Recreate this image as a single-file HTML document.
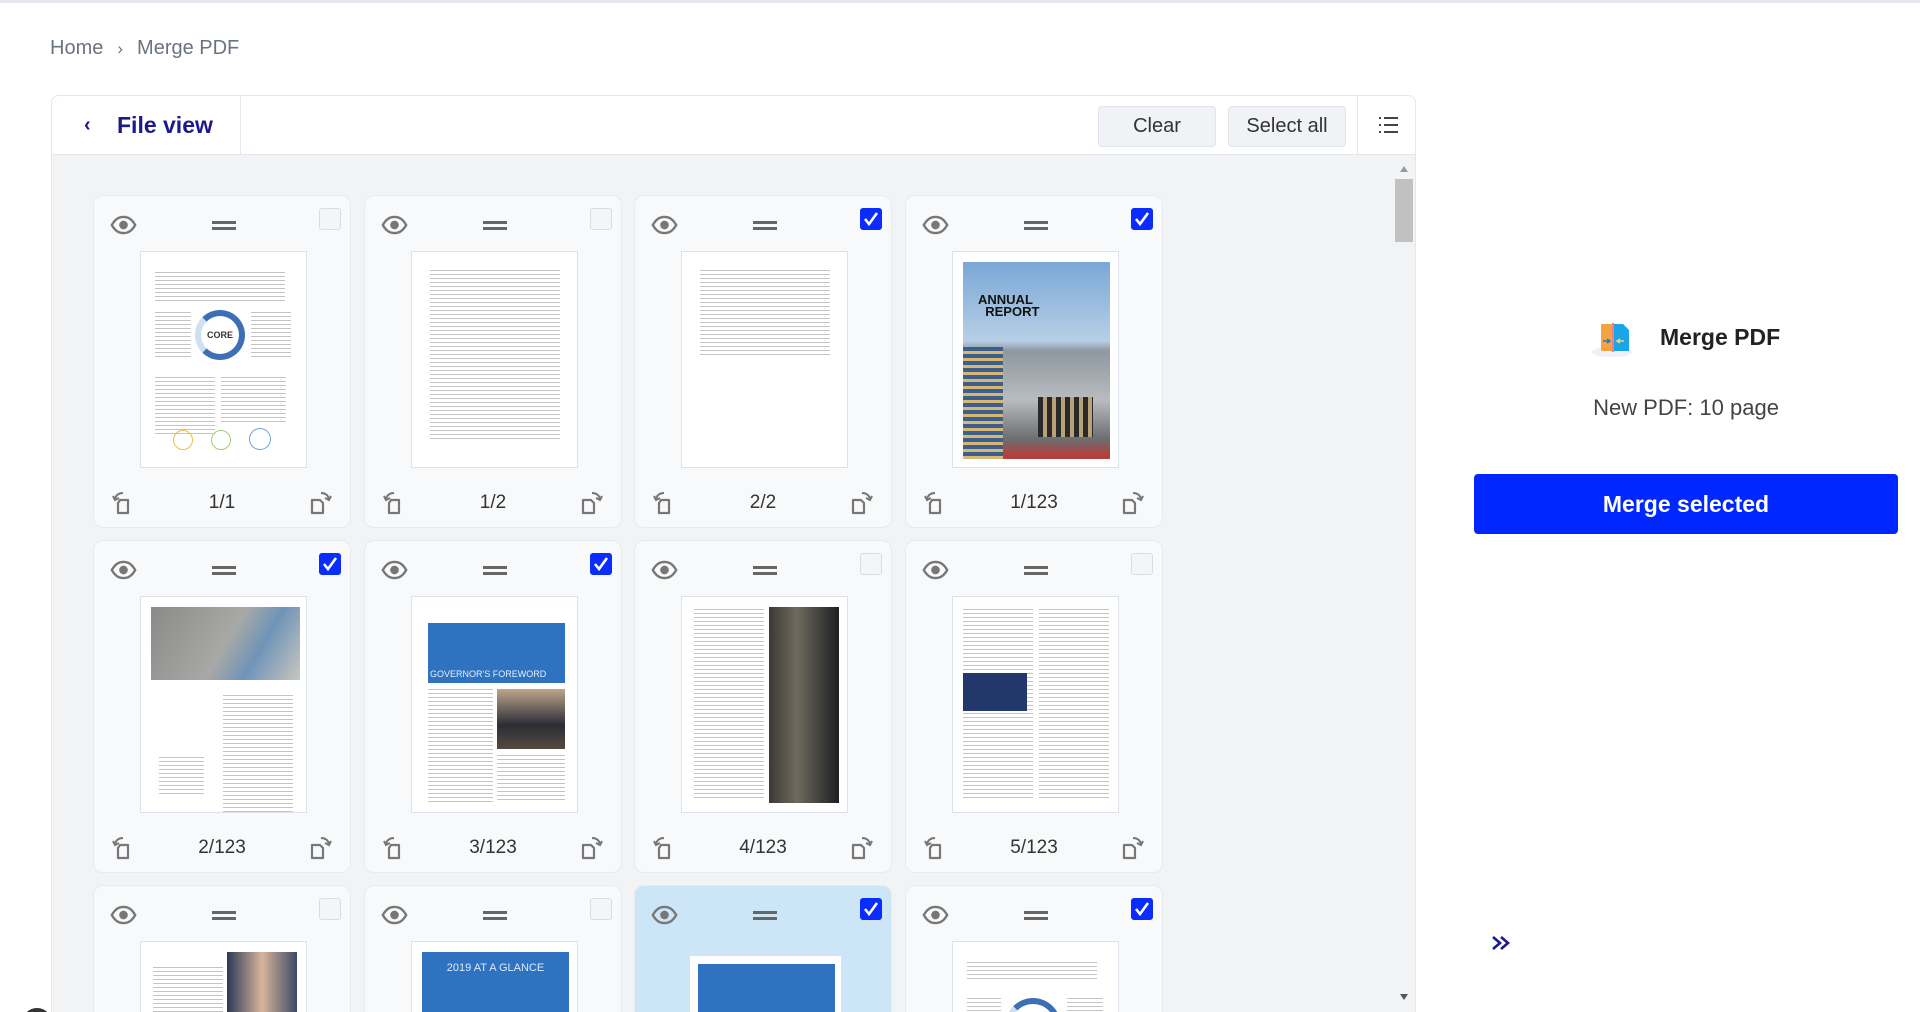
<!DOCTYPE html>
<html><head><meta charset="utf-8"><style>
*{box-sizing:border-box;margin:0;padding:0}
html,body{width:1920px;height:1012px;overflow:hidden;background:#fff;font-family:"Liberation Sans",sans-serif;position:relative}
.topline{position:absolute;left:0;top:0;width:1920px;height:3px;background:#e6e8ef}
.bc{position:absolute;left:50px;top:37px;font-size:20px;color:#6b7280}
.bc span{margin:0 14px;font-size:17px}
.panel{position:absolute;left:51px;top:95px;width:1365px;height:917px;border:1px solid #e3e6ec;border-bottom:none;border-radius:8px 8px 0 0;background:#f2f3f5;overflow:hidden}
.hdr{position:absolute;left:0;top:0;width:100%;height:59px;background:#fff;border-bottom:1px solid #e3e6ec}
.fv{position:absolute;left:0;top:0;width:189px;height:58px;border-right:1px solid #e3e6ec;font-weight:bold;color:#1a1a8e;font-size:23px;line-height:58px;padding-left:65px}
.fv i{position:absolute;left:32px;top:0;font-style:normal;font-size:20px}
.btn{position:absolute;top:10px;height:41px;background:#f0f2f5;border:1px solid #e0e3e8;border-radius:4px;font-size:20px;color:#333;text-align:center;line-height:39px}
.lst{position:absolute;left:1305px;top:0;width:59px;height:58px;border-left:1px solid #e3e6ec}
.sb{position:absolute;left:1341px;top:60px;width:22px;height:857px}
.card{position:absolute;width:258px;height:333px;background:#f8f9fa;border:1px solid #e8eaee;border-radius:10px;overflow:hidden}
.card.cut{height:127px;border-bottom:none;border-radius:10px 10px 0 0}
.card.hl{background:#cde6f7}
.eye{position:absolute;left:16px;top:19px}
.drag{position:absolute;left:118px;top:25px;width:24px;height:9px;border-top:3px solid #666;border-bottom:3px solid #666}
.cb{position:absolute;left:225px;top:12px;width:22px;height:22px;border:1px solid #ddd;border-radius:3px;background:#f4f5f7}
.cb.on{background:#0a2cff;border-color:#0a2cff}
.th{position:absolute;left:46px;top:55px;width:167px;height:217px;background:#fff;border:1px solid #dde1ea;overflow:hidden}
.lbl{position:absolute;left:0;width:100%;top:296px;text-align:center;font-size:19px;color:#333}
.rl{position:absolute;left:16px;top:294px}.rr{position:absolute;left:212px;top:294px}
.tx{position:absolute;background:repeating-linear-gradient(#c4c4c4 0 1px,transparent 1px 4px)}
</style></head><body>
<div class="topline"></div>
<div class="bc">Home<span>›</span>Merge PDF</div>
<div class="panel">
 <div class="hdr">
  <div class="fv"><i>‹</i>File view</div>
  <div class="btn" style="left:1046px;width:118px">Clear</div>
  <div class="btn" style="left:1176px;width:118px">Select all</div>
  <div class="lst"><svg width="59" height="58"><g stroke="#444" stroke-width="2"><line x1="21" y1="22" x2="23" y2="22"/><line x1="26" y1="22" x2="40" y2="22"/><line x1="21" y1="29" x2="23" y2="29"/><line x1="26" y1="29" x2="40" y2="29"/><line x1="21" y1="36" x2="23" y2="36"/><line x1="26" y1="36" x2="40" y2="36"/></g></svg></div>
 </div>
 <div class="sb"><svg width="22" height="857"><path d="M7 16l4-6 4 6z" fill="#999"/><rect x="2" y="23" width="18" height="63" fill="#c1c1c1"/><path d="M7 838l4 6 4-6z" fill="#555"/></svg></div>
</div>
<div id="cards"></div>
<div style="position:absolute;left:1590px;top:318px;width:44px;height:42px">
<svg width="44" height="42"><ellipse cx="22" cy="34" rx="20" ry="5" fill="#eef1f7"/><rect x="11" y="6" width="12" height="27" rx="1" fill="#f5a340"/><path d="M23 6h10l6 6v21H23z" fill="#1ba4e8"/><rect x="22" y="5" width="2" height="29" fill="#f08080"/><path d="M13 23h7M17 21l3 2-3 2" stroke="#1a7ae8" stroke-width="1.5" fill="none"/><path d="M34 23h-7M30 21l-3 2 3 2" stroke="#ffd36b" stroke-width="1.5" fill="none"/></svg></div>
<div style="position:absolute;left:1660px;top:324px;font-size:23px;font-weight:bold;color:#222">Merge PDF</div>
<div style="position:absolute;left:1474px;width:424px;top:395px;text-align:center;font-size:22px;color:#444">New PDF: 10 page</div>
<div style="position:absolute;left:1474px;top:474px;width:424px;height:60px;background:#0027ff;border-radius:4px;color:#fff;font-weight:bold;font-size:23px;text-align:center;line-height:60px">Merge selected</div>
<svg style="position:absolute;left:1490px;top:934px" width="22" height="18"><path d="M3 3l7 6-7 6M11 3l7 6-7 6" stroke="#1a1a8e" stroke-width="2.6" fill="none"/></svg>
<div style="position:absolute;left:0;top:1000px;width:80px;height:12px;overflow:hidden"><div style="position:absolute;left:22px;top:8px;width:30px;height:30px;border-radius:50%;background:#333"></div></div>
<script>
const xs=[93,364,634,905], ys=[195,540,885];
const labels=["1/1","1/2","2/2","1/123","2/123","3/123","4/123","5/123","","","",""];
const on=[0,0,1,1,1,1,0,0,0,0,1,1];
const T=(l,t,w,h)=>`<div class="tx" style="left:${l}px;top:${t}px;width:${w}px;height:${h}px"></div>`;
const thumbs=[
 T(14,20,130,30)+`<div style="position:absolute;left:54px;top:58px;width:50px;height:50px;border-radius:50%;border:6px solid #3d6fb6;border-left-color:#cfe0f2;font-size:9px;font-weight:bold;text-align:center;line-height:38px;color:#333">CORE</div>`+T(14,60,36,45)+T(110,60,40,45)+T(14,125,60,60)+T(80,125,65,45)+`<div style="position:absolute;left:32px;top:178px;width:20px;height:20px;border-radius:50%;border:1px solid #e8c14a"></div><div style="position:absolute;left:70px;top:178px;width:20px;height:20px;border-radius:50%;border:1px solid #9ccf6a"></div><div style="position:absolute;left:108px;top:176px;width:22px;height:22px;border-radius:50%;border:1px solid #6aa3dc"></div>`,
 T(18,18,130,170),
 T(18,18,130,85),
 `<div style="position:absolute;left:10px;top:10px;width:147px;height:197px;background:linear-gradient(#7aa7d6 0,#b7cfe6 40%,#8e98a0 45%,#b8bcbf 70%,#6b6e70 90%,#b3403f 98%)"></div><div style="position:absolute;left:10px;top:95px;width:40px;height:112px;background:repeating-linear-gradient(#3d5f88 0 4px,#d6b77a 4px 7px)"></div><div style="position:absolute;left:85px;top:145px;width:55px;height:40px;background:repeating-linear-gradient(90deg,#2a2a2a 0 5px,#b9a27a 5px 9px)"></div><div style="position:absolute;left:25px;top:42px;font-weight:bold;font-size:13px;line-height:12px;color:#111">ANNUAL<br>&nbsp;&nbsp;REPORT</div>`,
 `<div style="position:absolute;left:10px;top:10px;width:149px;height:73px;background:linear-gradient(120deg,#8a8a88,#a8a9a6 50%,#6f94b8 70%,#c8c6bf)"></div>`+T(82,98,70,120)+T(18,160,45,40),
 `<div style="position:absolute;left:16px;top:26px;width:137px;height:60px;background:#2f72bf;color:#e6f0ff;font-size:9px;white-space:nowrap;padding-top:46px;padding-left:2px">GOVERNOR'S FOREWORD</div>`+T(16,92,65,115)+`<div style="position:absolute;left:85px;top:92px;width:68px;height:60px;background:linear-gradient(#bfa58a,#2b2e36 60%,#574a40)"></div>`+T(85,158,68,48),
 T(12,12,70,190)+`<div style="position:absolute;left:87px;top:10px;width:70px;height:196px;background:linear-gradient(90deg,#3a3a36,#6f6a5c 40%,#1d1f22)"></div>`,
 T(10,12,70,190)+T(86,12,70,190)+`<div style="position:absolute;left:10px;top:76px;width:64px;height:38px;background:#22386a"></div>`,
 T(12,25,70,190)+`<div style="position:absolute;left:86px;top:10px;width:70px;height:196px;background:linear-gradient(90deg,#2c3a55,#d8b49c 50%,#3c4a66)"></div>`,
 `<div style="position:absolute;left:10px;top:10px;width:147px;height:196px;background:#2f72bf;color:#dce9ff;font-size:11px;text-align:center;padding-top:10px">2019 AT A GLANCE</div>`,
 `<div style="position:absolute;left:0;top:0;width:167px;height:217px;background:#cde6f7"></div><div style="position:absolute;left:8px;top:14px;width:151px;height:190px;background:#fff"></div><div style="position:absolute;left:16px;top:22px;width:137px;height:150px;background:#2f72bf;color:#dce9ff;font-size:11px;padding:50px 0 0 4px">MANDATE AND</div>`,
 T(14,20,130,20)+`<div style="position:absolute;left:52px;top:56px;width:56px;height:56px;border-radius:50%;border:6px solid #3d6fb6;border-left-color:#cfe0f2"></div>`+T(14,56,34,45)+T(114,56,36,45)
];
const eye=`<svg class="eye" width="27" height="20" viewBox="0 0 30 22"><path d="M2 11C6 4 10 2 15 2s9 2 13 9c-4 7-8 9-13 9S6 18 2 11z" fill="none" stroke="#777" stroke-width="2.6"/><circle cx="15" cy="11" r="4.8" fill="#777"/></svg>`;
const rl=`<svg class="rl" width="28" height="26"><path d="M5 9c1-4 4-6 8-6" fill="none" stroke="#777" stroke-width="2"/><path d="M3 6l2 4 4-2" fill="none" stroke="#777" stroke-width="2"/><path d="M10 10h8v13h-10v-10z" fill="none" stroke="#777" stroke-width="2.2" stroke-linejoin="round"/></svg>`;
const rr=`<svg class="rr" width="28" height="26"><path d="M23 9c-1-4-4-6-8-6" fill="none" stroke="#777" stroke-width="2"/><path d="M25 6l-2 4-4-2" fill="none" stroke="#777" stroke-width="2"/><path d="M6 10h8l3 3v10h-11z" fill="none" stroke="#777" stroke-width="2.2" stroke-linejoin="round"/></svg>`;
const chk=`<svg width="22" height="22" style="position:absolute;left:-1px;top:-1px"><path d="M5 11l4 5 8-11" stroke="#fff" stroke-width="2.6" fill="none"/></svg>`;
let h="";
for(let i=0;i<12;i++){const x=xs[i%4],y=ys[Math.floor(i/4)];
h+=`<div class="card${i==10?' hl':''}${i>=8?' cut':''}" style="left:${x}px;top:${y}px">${eye}<div class="drag"></div><div class="cb${on[i]?' on':''}">${on[i]?chk:''}</div><div class="th">${thumbs[i]}</div>${labels[i]?rl+`<div class="lbl">${labels[i]}</div>`+rr:''}</div>`;}
document.getElementById('cards').outerHTML=`<div style="position:absolute;left:0;top:0;width:1920px;height:1012px;overflow:hidden">${h}</div>`;
</script>
</body></html>
